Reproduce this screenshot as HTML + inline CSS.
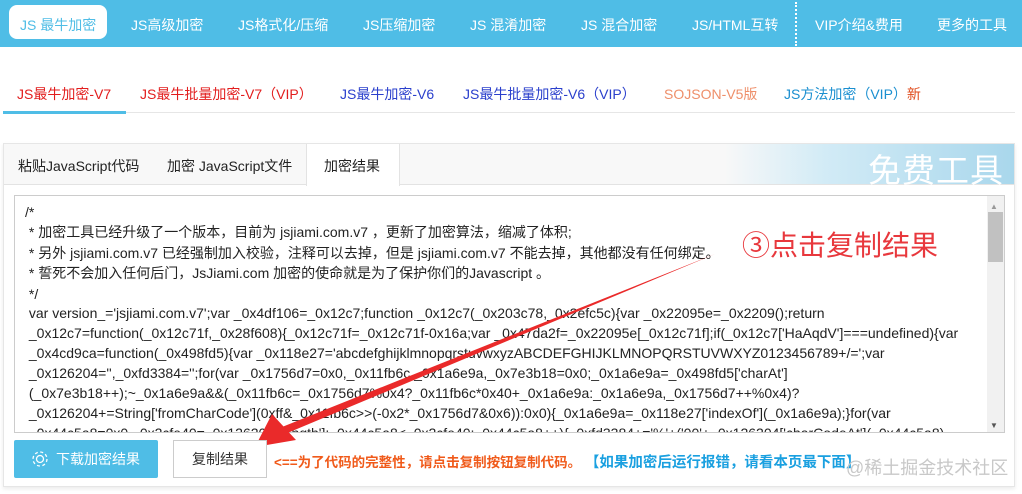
<!DOCTYPE html>
<html><head><meta charset="utf-8"><style>
*{margin:0;padding:0;box-sizing:border-box}
body{width:1022px;height:494px;overflow:hidden;background:#fff;font-family:"Liberation Sans","Noto Sans CJK SC",sans-serif;position:relative}
.nav{position:absolute;left:0;top:0;width:1022px;height:47px;background:#4fbde6}
.nav span{position:absolute;top:15px;font-size:14px;color:#fff;white-space:nowrap}
.act{position:absolute;left:9px;top:5px;width:98px;height:34px;background:#fff;border-radius:8px}
.sep{position:absolute;left:795px;top:2px;height:44px;border-left:2px dotted #fff}
.sub span{position:absolute;top:84px;font-size:14px;white-space:nowrap}
.panel{position:absolute;left:3px;top:143px;width:1012px;height:344px;border:1px solid #e6e6e6;background:#fff;box-shadow:0 2px 4px rgba(0,0,0,.08)}
.tabs{position:absolute;left:0;top:0;width:1010px;height:41px;background:#f8f8f8;border-bottom:1px solid #e3e3e3}
.tabs span{position:absolute;top:12px;font-size:14px;color:#222;white-space:nowrap}
.ta{position:absolute;left:14px;top:195px;width:991px;height:238px;border:1px solid #ccc;overflow:hidden;background:#fff}
.ta div{position:absolute;left:10px;font-size:14px;color:#222;white-space:nowrap;line-height:16px}
</style></head><body>
<div class="nav">
<div class="act"></div>
<span style="left:20px;color:#4fbde6">JS 最牛加密</span>
<span style="left:131px">JS高级加密</span>
<span style="left:238px">JS格式化/压缩</span>
<span style="left:363px">JS压缩加密</span>
<span style="left:470px">JS 混淆加密</span>
<span style="left:581px">JS 混合加密</span>
<span style="left:692px">JS/HTML互转</span>
<div class="sep"></div>
<span style="left:815px">VIP介绍&amp;费用</span>
<span style="left:937px">更多的工具</span>
</div>
<div class="sub">
<span style="left:17px;color:#e21d1d">JS最牛加密-V7</span>
<span style="left:140px;color:#e21d1d">JS最牛批量加密-V7（VIP）</span>
<span style="left:340px;color:#2a3fcc">JS最牛加密-V6</span>
<span style="left:463px;color:#2a3fcc">JS最牛批量加密-V6（VIP）</span>
<span style="left:664px;color:#ee8f6a">SOJSON-V5版</span>
<span style="left:784px;color:#1a8fd0">JS方法加密（VIP）<b style="font-weight:normal;color:#e04a1a">新</b></span>
</div>
<div style="position:absolute;left:3px;top:112px;width:1012px;height:1px;background:#e6e6e6"></div>
<div style="position:absolute;left:3px;top:111px;width:123px;height:3px;background:#4fbde6"></div>
<div class="panel">
<div class="tabs">
<div style="position:absolute;left:302px;top:0;width:94px;height:42px;background:#fff;border-left:1px solid #e3e3e3;border-right:1px solid #e3e3e3"></div>
<div style="position:absolute;left:720px;top:0;width:290px;height:40px;background:linear-gradient(90deg,rgba(255,255,255,0),#d2ebf6 35%,#a9d7ec)"></div>
<span style="left:14px">粘贴JavaScript代码</span>
<span style="left:163px">加密 JavaScript文件</span>
<span style="left:320px">加密结果</span>
<span style="left:864px;top:0;font-size:33px;color:#fff;letter-spacing:1px">免费工具</span>
</div>
</div>
<div class="ta">
<div style="top:8px">/*</div>
<div style="top:28px">&nbsp;* 加密工具已经升级了一个版本，目前为 jsjiami.com.v7 ，更新了加密算法，缩减了体积;</div>
<div style="top:49px">&nbsp;* 另外 jsjiami.com.v7 已经强制加入校验，注释可以去掉，但是 jsjiami.com.v7 不能去掉，其他都没有任何绑定。</div>
<div style="top:69px">&nbsp;* 誓死不会加入任何后门，JsJiami.com 加密的使命就是为了保护你们的Javascript 。</div>
<div style="top:90px">&nbsp;*/</div>
<div style="top:109px">&nbsp;var version_='jsjiami.com.v7';var _0x4df106=_0x12c7;function _0x12c7(_0x203c78,_0x2efc5c){var _0x22095e=_0x2209();return</div>
<div style="top:129px">&nbsp;_0x12c7=function(_0x12c71f,_0x28f608){_0x12c71f=_0x12c71f-0x16a;var _0x47da2f=_0x22095e[_0x12c71f];if(_0x12c7['HaAqdV']===undefined){var</div>
<div style="top:149px">&nbsp;_0x4cd9ca=function(_0x498fd5){var _0x118e27='abcdefghijklmnopqrstuvwxyzABCDEFGHIJKLMNOPQRSTUVWXYZ0123456789+/=';var</div>
<div style="top:169px">&nbsp;_0x126204='',_0xfd3384='';for(var _0x1756d7=0x0,_0x11fb6c,_0x1a6e9a,_0x7e3b18=0x0;_0x1a6e9a=_0x498fd5['charAt']</div>
<div style="top:189px">&nbsp;(_0x7e3b18++);~_0x1a6e9a&amp;&amp;(_0x11fb6c=_0x1756d7%0x4?_0x11fb6c*0x40+_0x1a6e9a:_0x1a6e9a,_0x1756d7++%0x4)?</div>
<div style="top:209px">&nbsp;_0x126204+=String['fromCharCode'](0xff&amp;_0x11fb6c&gt;&gt;(-0x2*_0x1756d7&amp;0x6)):0x0){_0x1a6e9a=_0x118e27['indexOf'](_0x1a6e9a);}for(var</div>
<div style="top:229px">&nbsp;_0x44c5a8=0x0,_0x2cfe40=_0x126204['length'];_0x44c5a8&lt;_0x2cfe40;_0x44c5a8++){_0xfd3384+='%'+('00'+_0x126204['charCodeAt'](_0x44c5a8)</div>
<div style="left:972px;top:0;width:17px;height:236px;background:#f1f1f1"></div>
<div style="left:973px;top:16px;width:15px;height:50px;background:#c1c1c1"></div>
<div style="left:975px;top:3px;font-size:8px;color:#999">▲</div>
<div style="left:975px;top:222px;font-size:8px;color:#555">▼</div>
</div>
<div style="position:absolute;left:742px;top:224px;font-size:28px;color:#e8383d;white-space:nowrap">③点击复制结果</div>
<svg style="position:absolute;left:0;top:0" width="1022" height="494">
<polygon points="715,254 282,427 285,434" fill="#ea2a2a"/>
<polygon points="255,447 272,414 296,440" fill="#ea2a2a"/>
</svg>
<div style="position:absolute;left:14px;top:440px;width:144px;height:38px;background:#4fbde6;border-radius:2px;color:#fff;font-size:14px;line-height:38px;padding-left:42px">下载加密结果</div>
<svg style="position:absolute;left:30px;top:449px" width="20" height="20" viewBox="0 0 20 20"><circle cx="10" cy="10" r="3.5" fill="none" stroke="#fff" stroke-width="1.3"/><circle cx="10" cy="10" r="7" fill="none" stroke="#fff" stroke-width="1.3" stroke-dasharray="3 2.5"/></svg>
<div style="position:absolute;left:173px;top:440px;width:94px;height:38px;border:1px solid #ccc;background:#fff;color:#333;font-size:14px;line-height:36px;text-align:center">复制结果</div>
<div style="position:absolute;left:274px;top:451px;font-size:13.5px;font-weight:bold;color:#f05a1a;white-space:nowrap">&lt;==为了代码的完整性，请点击复制按钮复制代码。 <span style="color:#1aa0e0;font-size:14.5px">【如果加密后运行报错，请看本页最下面】</span></div>
<div style="position:absolute;left:846px;top:454px;font-size:18px;color:#c8c8c8;white-space:nowrap">@稀土掘金技术社区</div>
</body></html>
